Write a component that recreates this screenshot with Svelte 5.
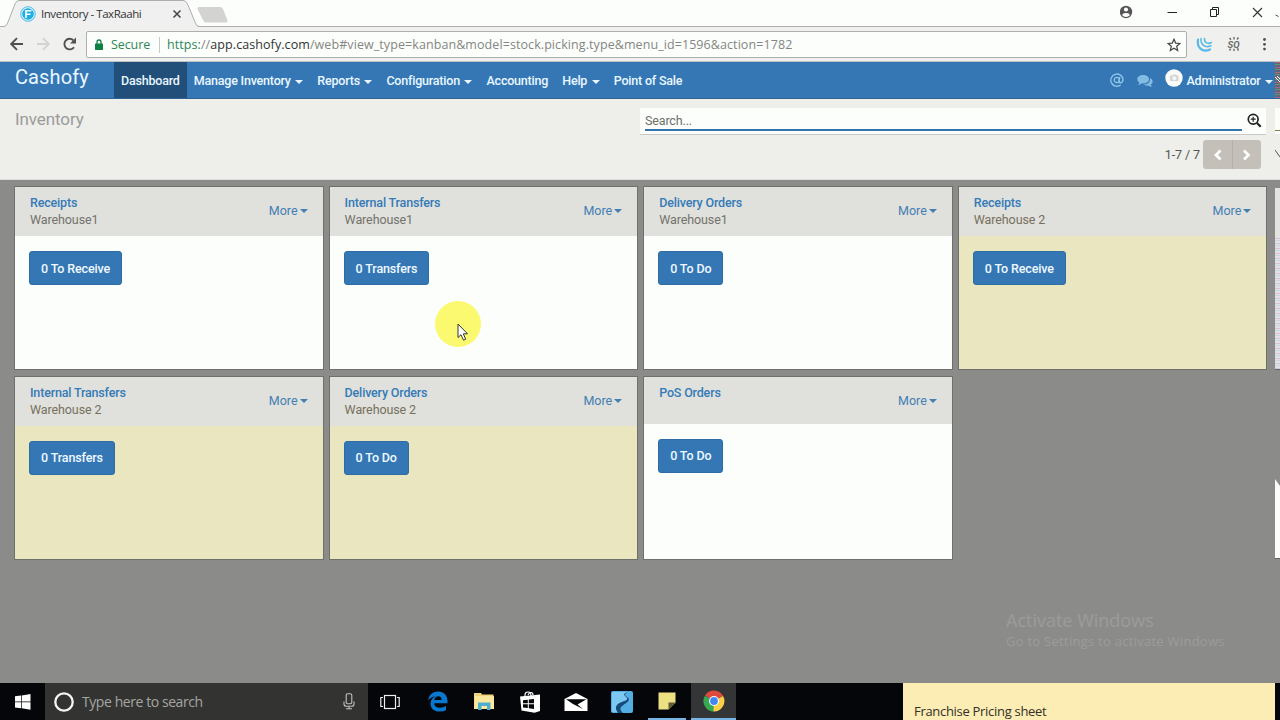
<script>
  const menu = [
    { label: 'Dashboard', active: true },
    { label: 'Manage Inventory', caret: true },
    { label: 'Reports', caret: true },
    { label: 'Configuration', caret: true },
    { label: 'Accounting' },
    { label: 'Help', caret: true },
    { label: 'Point of Sale' }
  ];
  const cards = [
    { title: 'Receipts', place: 'Warehouse1', action: '0 To Receive' },
    { title: 'Internal Transfers', place: 'Warehouse1', action: '0 Transfers' },
    { title: 'Delivery Orders', place: 'Warehouse1', action: '0 To Do' },
    { title: 'Receipts', place: 'Warehouse 2', action: '0 To Receive', tint: true },
    { title: 'Internal Transfers', place: 'Warehouse 2', action: '0 Transfers', tint: true },
    { title: 'Delivery Orders', place: 'Warehouse 2', action: '0 To Do', tint: true },
    { title: 'PoS Orders', place: '', action: '0 To Do' }
  ];
</script>

<div class="screen">
  <div class="tabs">
    <svg class="tabshape" width="240" height="28" viewBox="0 0 240 28">
      <path d="M-1 26.5H3C6 26.500 7 25 8 22L15 4Q16.500.5 19 .5H183Q186 .5 187.500 4L195 22Q196.500 26.500 199 26.500V28H-1Z" fill="#f0f0f0" />
      <path d="M0 26.500H3C6 26.500 7 25 8 22L15 4Q16.500.5 19 .5H183Q186 .5 187.500 4L195 22Q196.500 26.500 199 26.500H240" fill="none" stroke="#adaeac" />
      <path d="M199 7H220Q222 7 223 9L227.500 20.500Q228 22.500 226 22.500H206Q204 22.500 203 20L197.500 9Q197 7 199 7Z" fill="#d3d4d2" />
    </svg>
    <div class="tab">
      <svg width="16" height="16" viewBox="0 0 16 16">
        <circle cx="8" cy="8" r="7.300" fill="#d5f1fa" stroke="#4fbfe8" stroke-width="1" />
        <circle cx="8" cy="8" r="5.800" fill="#20ade4" />
        <path d="M6 12V4.800H11.500M6 8.200H10.500" fill="none" stroke="#fff" stroke-width="1.600" />
      </svg>
      <span class="tabname">Inventory - TaxRaahi</span>
      <svg class="x" width="8" height="8" viewBox="0 0 8 8"><path d="M.5.5l7 7M7.500.5l-7 7" stroke="#444" stroke-width="1.500" /></svg>
    </div>
    <div class="wincontrols">
      <svg width="160" height="26" viewBox="0 0 160 26" fill="none">
        <circle cx="6" cy="12" r="6.200" fill="#555655" /><circle cx="6" cy="9.500" r="2.100" fill="#fff" /><path d="M2.200 15.200Q2.500 12.900 6 12.900T9.800 15.200Q8.500 17 6 17T2.200 15.200Z" fill="#fff" />
        <path d="M47.500 12.500H57" stroke="#222" />
        <path d="M90.500 9.500h6v7h-6ZM92.500 9V7.500h6v7H97" stroke="#222" />
        <path d="M133 8l9 9M142 8l-9 9" stroke="#333" stroke-width="1.100" />
        <path d="M155.500 15l3 1.500" stroke="#555" />
      </svg>
    </div>
  </div>

  <div class="toolbar">
    <svg class="navicons" width="80" height="34" viewBox="0 0 80 34" fill="none" stroke-width="1.900">
      <path d="M23 17H11.500M17 11.200L11.200 17L17 22.800" stroke="#50514f" />
      <path d="M37 17H48.500M43 11.200L48.800 17L43 22.800" stroke="#d3d4d2" />
      <path d="M74 20.200A5.300 5.300 0 1 1 73.300 13.200" stroke="#50514f" /><path d="M76 10.500V16.500H70Z" fill="#50514f" />
    </svg>
    <div class="address">
      <svg width="8" height="11" viewBox="0 0 8 11"><path d="M2 5V3Q2 1 4 1T6 3V5" fill="none" stroke="#0b8043" stroke-width="1.300" /><rect y="4.500" width="8" height="6.500" rx=".7" fill="#0b8043" /></svg>
      <span class="secure">Secure</span>
      <span class="split"></span>
      <span class="url"><span class="proto">https:</span>//<span class="host">app.cashofy.com</span>/web#view_type=kanban&amp;model=stock.picking.type&amp;menu_id=1596&amp;action=1782</span>
      <svg class="star" width="14" height="14" viewBox="0 0 14 14"><path d="M7 1.200L8.700 5.100L12.900 5.500L9.700 8.300L10.700 12.500L7 10.300L3.300 12.500L4.300 8.300L1.100 5.500L5.300 5.100Z" fill="none" stroke="#444" stroke-width="1.200" /></svg>
    </div>
    <svg width="93" height="34" viewBox="0 0 93 34" fill="none">
      <g stroke="#59b9e7" stroke-width="1.500" stroke-linecap="round">
        <path d="M11 12.500C9.500 20 15 26 23 22.500" stroke-width="2.200" /><path d="M14 11.500C13.500 17.500 18 21.500 24 18.800" /><path d="M17.500 11.500C17 15 20.500 17.800 24.500 15.500" />
      </g>
      <text class="sq" x="40.500" y="20.800" fill="#6b6b69">SQ</text>
      <path d="M42.500 11l1.500 1.800M47 10V12.500M51.500 10.500l-1.500 2M42.500 23.500l1.200-1.800M47 24v-2.200M51.500 23.500l-1-1.500" stroke="#6b6b69" stroke-width="1.400" />
      <g fill="#50514f"><circle cx="77.500" cy="12.500" r="1.400" /><circle cx="77.500" cy="17.300" r="1.400" /><circle cx="77.500" cy="22.100" r="1.400" /></g>
    </svg>
  </div>

  <nav>
    <span class="brand">Cashofy</span>
    {#each menu as item}
      <span class="item" class:active={item.active}>{item.label}{#if item.caret}<i class="caret"></i>{/if}</span>
    {/each}
    <div class="user">
      <svg width="14" height="14" viewBox="0 0 14 14" fill="none" stroke="#8fc5e9" stroke-width="1.300"><circle cx="6.800" cy="7" r="2.600" /><path d="M9.700 4.200L9 8.500Q9 10 10.500 10Q13 9.500 13 6.600A6.100 6.100 0 1 0 10.600 12" /></svg>
      <svg class="chat" width="16" height="14" viewBox="0 0 16 14" fill="#82bce3"><path d="M6.200 1C9.500 1 12 2.800 12 5.200S9.500 9.400 6.200 9.400L4.800 9.300Q3 10.800 1 11Q2.300 9.800 2.300 8.600Q.3 7.300.3 5.200C.3 2.800 2.900 1 6.200 1Z" /><path d="M13 4Q15.700 5.300 15.700 7.600Q15.700 9.400 13.800 10.600Q14 12 15 13Q12.800 12.800 11.300 11.500Q8.500 12 6.500 10.600Q12.700 10.500 13 5.500Z" /></svg>
      <svg class="avatar" width="18" height="18" viewBox="0 0 18 18"><circle cx="9" cy="9" r="8.700" fill="#fafbf9" /><path d="M5 6.500H7L8 5.500H11L12 6.500H13.500V12H5Z" fill="#d5d6d4" /><circle cx="9.300" cy="9.200" r="2" fill="#f7f7f7" /></svg>
      <span>Administrator</span><i class="caret"></i>
    </div>
  </nav>

  <header>
    <h1>Inventory</h1>
    <div class="controls">
      <div class="search">
        <div class="field">Search...</div>
        <svg width="15" height="15" viewBox="0 0 15 15" fill="none" stroke="#222"><circle cx="6.200" cy="6.200" r="4.900" stroke-width="1.700" /><path d="M10 10L13.700 13.700" stroke-width="2.200" /><path d="M3.700 6.200h5M6.200 3.700v5" stroke-width="1.200" /></svg>
      </div>
      <div class="pager">
        <span>1-7 / 7</span>
        <div class="buttons">
          <b><svg width="10" height="12" viewBox="0 0 10 12"><path d="M7.500 1.500L3 6L7.500 10.500" fill="none" stroke="#fff" stroke-width="2.700" /></svg></b>
          <b><svg width="10" height="12" viewBox="0 0 10 12"><path d="M2 1.500L6.500 6L2 10.500" fill="none" stroke="#fff" stroke-width="2.700" /></svg></b>
        </div>
      </div>
    </div>
  </header>

  <main>
    {#each cards as card}
      <section class:tint={card.tint}>
        <div class="head" class:single={!card.place}>
          <div><div class="title">{card.title}</div><div class="place">{card.place}</div></div>
          <div class="more">More<i class="caret"></i></div>
        </div>
        <button>{card.action}</button>
      </section>
    {/each}
  </main>

  <footer>
    <div class="start"><svg width="16" height="16" viewBox="0 0 16 16" fill="#fff"><path d="M0 2.300L6 1.500V7.400H0ZM6.700 1.400L15.500 0V7.400H6.700ZM0 8.200H6V14.200L0 13.400ZM6.700 8.200H15.500V15.800L6.700 14.300Z" /></svg></div>
    <div class="find">
      <svg width="22" height="22" viewBox="0 0 22 22"><circle cx="11" cy="11" r="8.700" fill="none" stroke="#f4f4f4" stroke-width="2.300" /></svg>
      <span>Type here to search</span>
      <svg width="12" height="17" viewBox="0 0 12 17" fill="none" stroke="#c1c2c0" stroke-width="1.100"><rect x="3.200" y=".8" width="5.600" height="10" rx="1.500" /><path d="M1 8.500V11Q1 13.300 3.500 13.300H8.500Q11 13.300 11 11V8.500M6 13.300V15.500M3 15.700H9" /></svg>
    </div>
    <div class="app view"><svg width="20" height="16" viewBox="0 0 20 16" fill="none" stroke="#eee" stroke-width="1.200"><rect x="4.500" y="1.500" width="11" height="13" /><path d="M3 3.500H.8V12.500H3M17 3.500H19.200V12.500H17" /></svg></div>
    <div class="app"><svg width="20" height="21" viewBox="0 0 20 21"><path d="M.2 9.500C1 3.300 5 .5 10.200.5C16 .5 19.500 4.500 19.500 10V12.200H6.200C6.500 15.500 9 16.800 12 16.800Q15.200 16.800 18 15.100V19.200Q15.500 20.600 11.500 20.600C6 20.600 2.500 17.500 2.500 12.500Q2.500 7.800 7.200 5.500Q2.800 5.800.2 9.500ZM6.300 8.900H13.600Q13.500 5.200 10.200 5.200Q7.200 5.200 6.300 8.900Z" fill="#0877cf" fill-rule="evenodd" /></svg></div>
    <div class="app"><svg width="20" height="19" viewBox="0 0 20 19"><path d="M0 1H7L8 2.500H19.500V17H0Z" fill="#efd477" /><path d="M.5 4H20V17H.5Z" fill="#fae99d" /><path d="M4 18V10.500H16.500V18H13V14H7.500V18Z" fill="#4daed2" /></svg></div>
    <div class="app"><svg width="21" height="22" viewBox="0 0 21 22"><path d="M0 5.500L20 3.500V20L14.500 21.800L1.500 19.500Z" fill="#fff" /><path d="M5 6V4Q5 1 8 1Q11 1 11 5M8 4Q9 1.500 11 1.500T13 4" fill="none" stroke="#fff" stroke-width="1.200" /><path d="M3 9.200L7.800 8.700V12.300H3ZM8.800 8.600L14 8V12.300H8.800ZM3 13.300H7.800V17L3 16.500ZM8.800 13.300H14V17.900L8.800 17.200Z" fill="#050609" /></svg></div>
    <div class="app"><svg width="24" height="20" viewBox="0 0 24 20"><path d="M.5 7L12 1L23.500 7V19H.5Z" fill="#fff" /><path d="M2 7.200L22.500 7.200L13.500 12.500L19 17L9 12Z" fill="#050609" /></svg></div>
    <div class="app"><svg width="22" height="22" viewBox="0 0 22 22"><rect width="22" height="22" rx="2" fill="#53afe1" /><path d="M1 1h18Q11 3 17 7Q20 9 8 15Q6 17 10 21H1Z" fill="#7bc9f1" /><path d="M19 .5Q10 2.500 14.500 5.500T12 10.500Q1 14 7 22H12Q6.500 17.500 13 13.500Q21 9 16 6Q11 3 19 .5Z" fill="#174a78" /></svg></div>
    <div class="app open"><svg width="18" height="18" viewBox="0 0 18 18"><path d="M.5.5H17.500V10.500L10.500 17.500H.5Z" fill="#ede083" /><path d="M10.500 10.500H17.500L10.500 17.500Z" fill="#605b37" /></svg></div>
    <div class="app current"><svg width="22" height="22" viewBox="0 0 22 22"><path d="M11 11L2 5.500A10.500 10.500 0 0 1 20.200 6Z" fill="#df493b" /><path d="M11 11L1.900 5.700A10.500 10.500 0 0 0 11 21.500Z" fill="#36a852" /><path d="M11 11L20.100 6A10.500 10.500 0 0 1 10.500 21.500Z" fill="#fbd046" /><circle cx="11" cy="11" r="5" fill="#fff" /><circle cx="11" cy="11" r="3.900" fill="#4285f4" /></svg></div>
    <div class="note">Franchise Pricing sheet</div>
  </footer>

  <div class="watermark"><div>Activate Windows</div><p>Go to Settings to activate Windows</p></div>
  <div class="spot"></div>
  <svg class="cursor" width="13" height="19" viewBox="0 0 13 19"><path d="M1 1V14.500L4 11.700L6.500 17.200L8.700 16.200L6.300 10.800H10.500Z" fill="#fff" stroke="#333" /></svg>
  <svg class="edge" width="5" height="500" viewBox="0 0 5 500">
    <defs>
      <pattern id="noise" width="5" height="5" patternUnits="userSpaceOnUse"><rect width="5" height="5" fill="#686570" /><path d="M0 .5H5" stroke="#aa697a" /><path d="M0 2.500H5" stroke="#609675" /><path d="M2 4.500H5" stroke="#5364a4" /></pattern>
      <pattern id="lines" width="5" height="5" patternUnits="userSpaceOnUse"><rect width="5" height="5" fill="#e4e1e6" /><path d="M0 1.500H5" stroke="#d4c4dc" /><path d="M0 3.500H5" stroke="#c7dadd" /></pattern>
    </defs>
    <rect width="5" height="36" fill="url(#noise)" /><path d="M0 15L5 20M2 14L5 17" stroke="#fff" />
    <rect y="46" width="5" height="26" fill="#fcfdfb" /><path d="M0 68.500H5" stroke="#728443" />
    <path d="M0 88L5 95" stroke="#555" />
    <rect y="126" width="5" height="49" fill="#e3e4e1" /><rect y="175" width="5" height="132" fill="url(#lines)" /><path d="M0 307.500H5M0 496.500H5" stroke="#666864" />
    <path d="M0 417L5 424V496H0Z" fill="#fcfdfb" />
  </svg>
</div>

<style>
  :global(body) { margin: 0; overflow: hidden; }
  * { box-sizing: border-box; }
  svg { display: block; flex: none; }
  .screen { position: relative; width: 1280px; height: 720px; display: flex; flex-direction: column; overflow: hidden; background: #8b8c89; font-family: Roboto, sans-serif; font-size: 13px; }
  .tabs { position: relative; height: 27px; flex: none; display: flex; justify-content: space-between; background: #fcfefb; border-bottom: 1px solid #adaeac; }
  .tabshape { position: absolute; left: 0; top: 0; }
  .tab { position: relative; display: flex; align-items: center; padding: 0 0 0 20px; width: 190px; height: 27px; }
  .tabname { width: 132px; margin-left: 5px; font: 11.500px "Open Sans", sans-serif; letter-spacing: -.45px; color: #333; white-space: nowrap; }
  .wincontrols { width: 160px; }
  .toolbar { height: 35px; flex: none; display: flex; background: #f0f1ef; border-bottom: 1px solid #bfc1be; }
  .navicons { margin-right: 6px; }
  .address { width: 1101px; height: 27px; margin-top: 4px; display: flex; align-items: center; border: 1px solid #aeb0ad; border-radius: 2px; background: #fcfefb; padding-left: 8px; font: 12.500px "Open Sans", sans-serif; white-space: nowrap; }
  .secure { width: 39px; margin-left: 8px; color: #2d8758; letter-spacing: -.1px; }
  .split { height: 16px; width: 1px; background: #c8cac7; margin: 0 7px 0 9px; }
  .url { color: #858684; letter-spacing: .08px; }
  .proto { color: #2d8758; }
  .host { color: #333; }
  .star { margin: 0 5px 0 auto; }
  .sq { font: italic 700 9.500px Roboto, sans-serif; }
  nav { height: 37px; flex: none; display: flex; background: #3577b5; color: #e9f7ff; border-bottom: 1px solid #2e6394; font-weight: 500; font-size: 12.500px; letter-spacing: -.2px; white-space: nowrap; }
  .brand { width: 114px; padding-left: 15px; font-size: 20px; line-height: 31px; font-weight: 400; letter-spacing: .1px; }
  .item { display: flex; align-items: center; padding: 0 7px; }
  .active { background: #214f79; }
  .caret { display: inline-block; border: 4px solid transparent; border-top-color: currentColor; border-bottom: 0; margin-left: 5px; }
  nav .caret { margin-left: 4.500px; margin-top: 3px; }
  .user { margin: 0 7px 0 auto; display: flex; align-items: center; }
  .chat { margin: 2px 12px 0 13px; }
  .avatar { margin: -5px 3px 0 0; }
  header { height: 81px; flex: none; display: flex; background: #eeeeeb; border-bottom: 1px solid #dcddda; }
  h1 { width: 640px; margin: 0; padding: 8px 0 0 15px; font-size: 17px; line-height: 24px; font-weight: 400; color: #9b9c99; letter-spacing: -.1px; }
  .controls { width: 626px; padding-top: 9px; }
  .search { height: 27px; display: flex; background: #fcfefb; border-bottom: 1px solid #c9cac7; gap: 5px; padding-left: 5px; }
  .search svg { margin-top: 5px; }
  .field { width: 597px; height: 23px; border-bottom: 2px solid #3474ad; line-height: 25px; color: #6d6e6c; font-size: 12.500px; letter-spacing: -.15px; }
  .pager { display: flex; justify-content: flex-end; align-items: center; gap: 3px; padding: 5px 5px 0 0; color: #555653; font-size: 12.500px; letter-spacing: -.1px; }
  .buttons { display: flex; border-radius: 3px; overflow: hidden; background: #c4c0b9; }
  .buttons b { width: 29px; height: 29px; display: grid; place-items: center; }
  .buttons b + b { border-left: 1px solid #b5b1aa; }
  main { flex: 1; display: grid; grid-template-columns: repeat(4, 307.600px); grid-auto-rows: 182px; gap: 7.500px 7px; padding: 7px 0 0 15px; }
  section { background: #fcfefb; box-shadow: 0 0 0 1px #6e706c; }
  section.tint { background: #eae7c0; }
  .head { height: 49px; display: flex; justify-content: space-between; background: #e0e0dd; padding: 7px 15px 0; }
  .head.single { height: 47px; }
  .title { color: #347bb7; font-weight: 500; font-size: 12.500px; line-height: 17px; letter-spacing: -.17px; }
  .place { color: #73736b; line-height: 17px; font-size: 12.500px; letter-spacing: -.1px; }
  .tint .place { color: #77705c; }
  .more { color: #437fb2; line-height: 33px; font-size: 12.500px; }
  .more .caret { margin-left: 2px; vertical-align: 2px; border-top-width: 4.500px; }
  button { display: block; height: 34px; margin: 15px 0 0 14px; padding: 0 11px; border: 1px solid #2e6da4; border-radius: 3px; background: #3577b5; color: #eff9ff; font: 500 12.500px Roboto, sans-serif; letter-spacing: -.13px; }
  footer { height: 37px; flex: none; display: flex; background: #050609; }
  .start { width: 45px; display: grid; place-items: center; }
  .find { width: 323px; display: flex; align-items: center; padding: 0 13px 0 8px; background: #333431; color: #a5a6a3; font: 14px "Open Sans", sans-serif; letter-spacing: -.43px; }
  .find span { flex: 1; margin-left: 7px; white-space: nowrap; }
  .app { width: 46px; display: grid; place-items: center; }
  .view { width: 47px; padding-right: 4px; }
  .open { border-bottom: 2px solid #78b5e7; margin: 0 5px 0 3px; width: 38px; }
  .current { border-bottom: 2px solid #78b5e7; background: #343537; width: 45px; }
  .note { width: 372px; margin: 0 5px 0 auto; padding: 19px 0 0 11px; background: #fcedb4; color: #333029; font: 13px/18px "Open Sans", sans-serif; letter-spacing: -.3px; white-space: nowrap; }
  .watermark { position: absolute; left: 1006px; top: 608px; color: #9b9c99; font: 18px/24px "Open Sans", sans-serif; white-space: nowrap; }
  .watermark p { margin: 0; font-size: 13px; line-height: 18px; letter-spacing: .27px; }
  .spot { position: absolute; left: 435px; top: 301px; width: 46px; height: 46px; border-radius: 50%; background: #fbf96f; }
  .cursor { position: absolute; left: 457px; top: 323px; }
  .edge { position: absolute; left: 1275px; top: 62px; }
</style>
